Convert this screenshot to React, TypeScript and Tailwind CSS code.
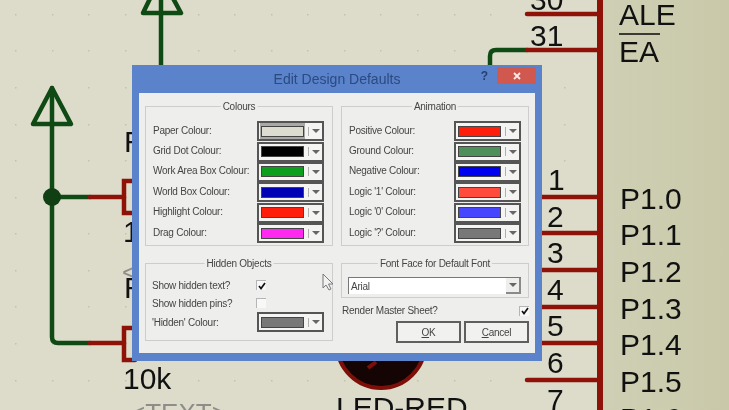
const dotXs = [15, 52, 88, 125, 161, 198, 234, 271, 307, 344, 380, 417, 454, 490, 527, 564]
const dotYs = [14, 50, 87, 124, 160, 197, 233, 270, 306, 343, 380]

const canvasLabels = [
  { text: 'R1', cls: 'left-[124px] top-[127px]' },
  { text: '10k', cls: 'left-[123px] top-[217px]' },
  { text: 'R2', cls: 'left-[124px] top-[273px]' },
  { text: '10k', cls: 'left-[123px] top-[364px]' },
  { text: '30', cls: 'left-[530px] top-[-15px]' },
  { text: '31', cls: 'left-[530px] top-[21px]' },
  { text: '1', cls: 'left-[548px] top-[165px]' },
  { text: '2', cls: 'left-[547px] top-[202px]' },
  { text: '3', cls: 'left-[547px] top-[238px]' },
  { text: '4', cls: 'left-[547px] top-[275px]' },
  { text: '5', cls: 'left-[547px] top-[311px]' },
  { text: '6', cls: 'left-[547px] top-[348px]' },
  { text: '7', cls: 'left-[547px] top-[385px]' },
  { text: 'ALE', cls: 'left-[619px] top-[0px]' },
  { text: 'EA', cls: 'left-[619px] top-[37px]' },
  { text: 'P1.0', cls: 'left-[620px] top-[184px]' },
  { text: 'P1.1', cls: 'left-[620px] top-[220px]' },
  { text: 'P1.2', cls: 'left-[620px] top-[257px]' },
  { text: 'P1.3', cls: 'left-[620px] top-[294px]' },
  { text: 'P1.4', cls: 'left-[620px] top-[330px]' },
  { text: 'P1.5', cls: 'left-[620px] top-[367px]' },
  { text: 'P1.6', cls: 'left-[620px] top-[404px]' },
  { text: 'LED-RED', cls: 'left-[336px] top-[393px]' },
]

const designColours = [
  { label: 'Paper Colour:', swatch: 'bg-[#dcdcd0]', focused: true },
  { label: 'Grid Dot Colour:', swatch: 'bg-[#000000]' },
  { label: 'Work Area Box Colour:', swatch: 'bg-[#0aa01e]' },
  { label: 'World Box Colour:', swatch: 'bg-[#0000b4]' },
  { label: 'Highlight Colour:', swatch: 'bg-[#ff1e0a]' },
  { label: 'Drag Colour:', swatch: 'bg-[#ff28f0]' },
]

const animationColours = [
  { label: 'Positive Colour:', swatch: 'bg-[#ff1e0a]' },
  { label: 'Ground Colour:', swatch: 'bg-[#4f8f5a]' },
  { label: 'Negative Colour:', swatch: 'bg-[#0000f0]' },
  { label: "Logic '1' Colour:", swatch: 'bg-[#ff4b3c]' },
  { label: "Logic '0' Colour:", swatch: 'bg-[#4646ff]' },
  { label: "Logic '?' Colour:", swatch: 'bg-[#787878]' },
]

const Schematic = () => (
  <svg className="absolute inset-0" width="729" height="410" viewBox="0 0 729 410" fill="none">
    {dotXs.flatMap((x) => dotYs.map((y) => <rect key={`${x}-${y}`} x={x} y={y} width="1.5" height="1.5" fill="#c2c1b1" />))}
    <g stroke="#0f4a14" strokeWidth="4.5" strokeLinejoin="round" strokeLinecap="round">
      <path d="M161 70V0" />
      <path d="M161 -24L181 13H143Z" />
      <path d="M52 88L71 124H33Z" />
      <path d="M52 88V337Q52 343 58 343H90" />
      <path d="M52 197H90" />
      <path d="M490 66V56Q490 50 496 50H527" />
    </g>
    <circle cx="52" cy="197" r="9" fill="#0f3f12" />
    <g stroke="#8f1209" strokeWidth="4.5" strokeLinecap="round">
      <path d="M90 197H124" />
      <path d="M90 343H124" />
      <path d="M135 181H124V213H135" />
      <path d="M135 328H124V360H135" />
      <path d="M527 14H600" />
      <path d="M527 50H600" />
      <path d="M527 380H600" />
      <path d="M540 197H600" />
      <path d="M540 233H600" />
      <path d="M540 270H600" />
      <path d="M540 307H600" />
      <path d="M540 343H600" />
    </g>
    <rect x="597" y="0" width="6" height="410" fill="#8f1209" />
    <circle cx="381" cy="344" r="44" fill="#140404" stroke="#7d0f08" strokeWidth="4" />
    <path d="M368 368L376 362" stroke="#7d0f08" strokeWidth="4" />
    <rect x="619" y="33" width="41" height="2" fill="#3a3a34" />
  </svg>
)

const DropArrow = () => (
  <svg width="8" height="4" viewBox="0 0 8 4" className="shrink-0">
    <path d="M0 0H8L4 4Z" fill="#666666" />
  </svg>
)

const ColourCombo = ({ swatch, focused }: { swatch: string; focused?: boolean }) => (
  <div className="flex h-[20px] w-[67px] shrink-0 items-center border-2 border-[#555555] bg-[#f4f4f2]">
    <div className={`ml-[1px] flex h-full w-[45px] items-center justify-center ${focused ? 'bg-[#a9a9a5]' : ''}`}>
      <div className={`h-[11px] w-[43px] border border-[#444444] ${swatch}`} />
    </div>
    <div className="mx-[3px] h-[9px] w-px bg-[#b0b0b0]" />
    <DropArrow />
  </div>
)

const ColourRow = ({ label, swatch, focused }: { label: string; swatch: string; focused?: boolean }) => (
  <div className="flex h-[20.4px] items-center justify-between">
    <span className="pb-[2px]">{label}</span>
    <ColourCombo swatch={swatch} focused={focused} />
  </div>
)

const Group = ({ title, className, children }: { title: string; className: string; children: React.ReactNode }) => (
  <div className={`relative border border-[#cdcecb] ${className}`}>
    <span className="absolute top-[-7px] left-1/2 -translate-x-1/2 whitespace-nowrap bg-[#eeefec] px-[2px] leading-[13px]">
      {title}
    </span>
    {children}
  </div>
)

const CheckBox = ({ checked }: { checked?: boolean }) => (
  <div className="flex h-[10px] w-[10px] items-center justify-center border-t border-l border-[#b5b5b5] bg-[#f8f8f8]">
    {checked && (
      <svg width="8" height="8" viewBox="0 0 8 8" fill="none">
        <path d="M1 4L3 6.5L7 1" stroke="#111111" strokeWidth="1.7" />
      </svg>
    )}
  </div>
)

const DialogButton = ({ accel, rest }: { accel: string; rest: string }) => (
  <button className="h-[22px] w-[65px] border-2 border-[#5f5f5f] bg-[#f1f1ef] text-[#444444]">
    <span className="underline">{accel}</span>
    {rest}
  </button>
)

const DefaultsDialog = () => (
  <div className="absolute top-[65px] left-[132px] flex h-[296px] w-[410px] flex-col bg-[#5a83cb] px-[7px] pb-[8px]">
    <div className="grid h-[28px] shrink-0 grid-cols-[1fr_auto_1fr]">
      <div />
      <span className="pt-[5px] text-[14px] leading-[18px] text-[#2b4a80]">Edit Design Defaults</span>
      <div className="flex items-start justify-end">
        <span className="mt-[4px] mr-[9px] text-[12px] leading-[14px] font-bold text-[#24406f]">?</span>
        <div className="mt-[2px] mr-[-1px] flex h-[17px] w-[39px] items-center justify-center bg-[#d0584e]">
          <svg width="8" height="8" viewBox="0 0 8 8" fill="none">
            <path d="M1 1L7 7M7 1L1 7" stroke="#f7ecea" strokeWidth="1.8" />
          </svg>
        </div>
      </div>
    </div>
    <div className="grid flex-1 grid-cols-[188px_188px] content-start gap-x-[8px] gap-y-[17px] bg-[#eeefec] pt-[13px] pl-[6px] text-[10px] tracking-[-0.25px] text-[#454545]">
      <Group title="Colours" className="h-[140px] pt-[14px] pr-[8px] pl-[7px]">
        {designColours.map((row) => (
          <ColourRow key={row.label} {...row} />
        ))}
      </Group>
      <Group title="Animation" className="h-[140px] pt-[14px] pr-[7px] pl-[7px]">
        {animationColours.map((row) => (
          <ColourRow key={row.label} {...row} />
        ))}
      </Group>
      <Group title="Hidden Objects" className="h-[78px] pt-[12px] pr-[8px] pl-[6px]">
        <div className="flex h-[18px] items-center justify-between pr-[58px]">
          <span>Show hidden text?</span>
          <CheckBox checked />
        </div>
        <div className="flex h-[18px] items-center justify-between pr-[58px]">
          <span>Show hidden pins?</span>
          <CheckBox />
        </div>
        <div className="flex h-[20px] items-center justify-between">
          <span>'Hidden' Colour:</span>
          <ColourCombo swatch="bg-[#787878]" />
        </div>
      </Group>
      <div className="flex h-[80px] flex-col">
        <Group title="Font Face for Default Font" className="h-[35px] shrink-0 pt-[13px] pr-[7px] pl-[6px]">
          <div className="flex h-[17px] items-center justify-between border-t border-l border-[#777777] bg-white pl-[2px]">
            <span>Arial</span>
            <div className="flex h-full w-[15px] items-center justify-center border-r-2 border-b-2 border-[#8a8a8a] bg-[#eeeeec]">
              <DropArrow />
            </div>
          </div>
        </Group>
        <div className="flex h-[23px] shrink-0 items-center justify-between pt-[2px] pl-[1px]">
          <span>Render Master Sheet?</span>
          <CheckBox checked />
        </div>
        <div className="flex justify-end gap-[3px]">
          <DialogButton accel="O" rest="K" />
          <DialogButton accel="C" rest="ancel" />
        </div>
      </div>
    </div>
  </div>
)

const App = () => (
  <div className="relative h-[410px] w-[729px] overflow-hidden bg-[#dddccb] font-['Liberation_Sans',sans-serif] blur-[0.4px]">
    <div className="absolute top-0 right-0 bottom-0 w-[126px] bg-gradient-to-r from-[#cfcfb5] to-[#c9c9a9]" />
    <Schematic />
    {canvasLabels.map((label) => (
      <span key={label.cls} className={`absolute text-[30px] leading-[30px] text-[#111111] ${label.cls}`}>
        {label.text}
      </span>
    ))}
    <span className="absolute top-[257px] left-[122px] text-[26px] leading-[30px] text-[#8e8e88]">&lt;TEXT&gt;</span>
    <span className="absolute top-[398px] left-[130px] text-[26px] leading-[30px] text-[#8e8e88]">&lt;TEXT&gt;</span>
    <DefaultsDialog />
    <svg className="absolute top-[273px] left-[321px]" width="13" height="19" viewBox="0 0 13 19" fill="none">
      <path d="M2 1V15L5 12L8 17L10 16L7.5 11H12Z" fill="#f2f2f0" stroke="#77797c" strokeWidth="1" />
    </svg>
  </div>
)

export default App
